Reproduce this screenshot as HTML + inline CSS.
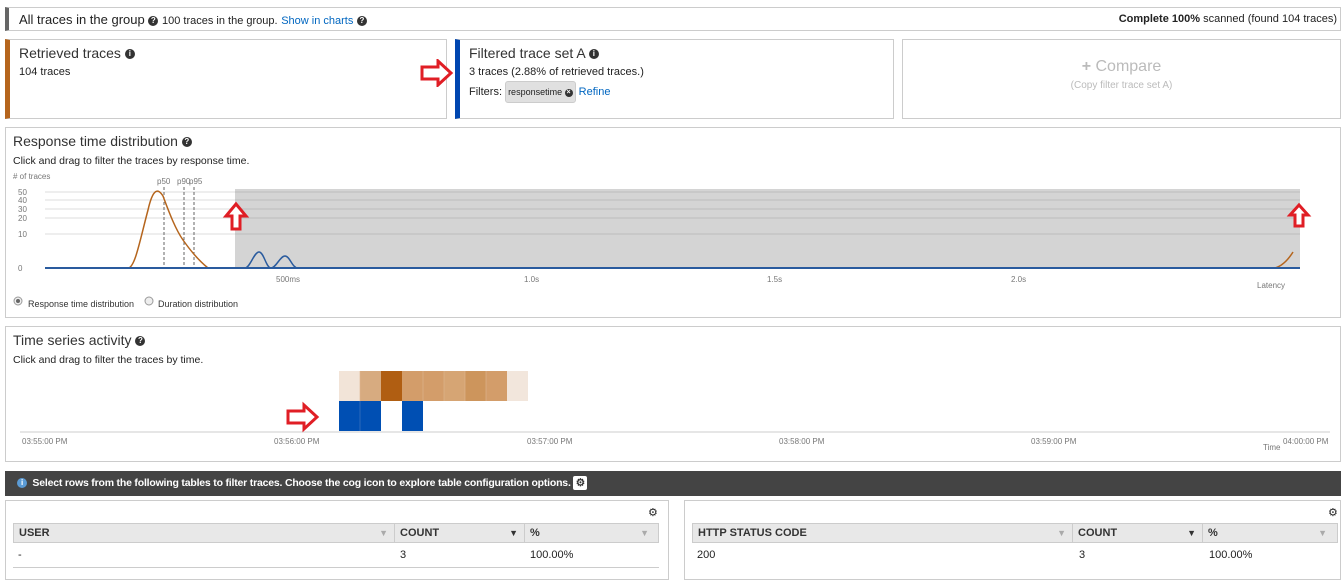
<!DOCTYPE html>
<html><head><style>
body{margin:0;width:1341px;height:573px;overflow:hidden;background:#fff;font-family:"Liberation Sans",sans-serif;color:#222;position:relative}
.a{position:absolute}
.box{position:absolute;border:1px solid #ccc;background:#fff;box-sizing:border-box}
.q{display:inline-block;width:10px;height:10px;border-radius:50%;background:#333;color:#fff;font-size:8px;line-height:10px;text-align:center;font-weight:bold;vertical-align:middle}
.lnk{color:#0066c0}
.th{position:absolute;top:0;height:19px;line-height:19px;font-size:11px;color:#333;padding-left:5px;box-sizing:border-box;border-right:1px solid #ccc}
</style></head><body>
<div class="box" style="left:5px;top:7px;width:1336px;height:24px;border-left:4px solid #666"></div>
<div class="a" style="left:19px;top:12px;font-size:13px">All traces in the group <span class="q">?</span> <span style="font-size:11px">100 traces in the group.</span> <span class="lnk" style="font-size:11px">Show in charts</span> <span class="q">?</span></div>
<div class="a" style="right:4px;top:13px;font-size:11px"><b>Complete 100%</b> scanned (found 104 traces)</div>

<div class="box" style="left:5px;top:39px;width:442px;height:80px;border-left:5px solid #b5651d"></div>
<div class="a" style="left:19px;top:45px;font-size:14px;color:#333">Retrieved traces <span class="q">i</span></div>
<div class="a" style="left:19px;top:66px;font-size:11px">104 traces</div>

<div class="box" style="left:455px;top:39px;width:439px;height:80px;border-left:5px solid #0046b0"></div>
<div class="a" style="left:469px;top:45px;font-size:14px;color:#333">Filtered trace set A <span class="q">i</span></div>
<div class="a" style="left:469px;top:66px;font-size:11px">3 traces (2.88% of retrieved traces.)</div>
<div class="a" style="left:469px;top:81px;font-size:11px">Filters: <span style="display:inline-block;background:#e0e0e0;border:1px solid #ccc;border-radius:3px;padding:5px 2px;font-size:9px">responsetime <span class="q" style="width:8px;height:8px;line-height:8px;font-size:7px">×</span></span> <span class="lnk">Refine</span></div>
<svg class="a" style="left:420px;top:59px" width="34" height="28"><path d="M2 8h16V2l13 12-13 12v-6H2z" fill="#fff" stroke="#e01e25" stroke-width="3"/></svg>

<div class="box" style="left:902px;top:39px;width:439px;height:80px"></div>
<div class="a" style="left:902px;top:58px;width:439px;text-align:center;color:#bbb;font-size:16px"><b>+</b> Compare</div>
<div class="a" style="left:902px;top:80px;width:439px;text-align:center;color:#bbb;font-size:10px">(Copy filter trace set A)</div>

<div class="box" style="left:5px;top:127px;width:1336px;height:191px"></div>
<div class="a" style="left:13px;top:133px;font-size:14px;color:#333">Response time distribution <span class="q">?</span></div>
<div class="a" style="left:13px;top:155px;font-size:10.5px">Click and drag to filter the traces by response time.</div>
<svg class="a" style="left:0;top:170px" width="1341" height="145" font-family="Liberation Sans" font-size="8" fill="#777">
<text x="13" y="9" font-size="8">#&#160;of traces</text>
<g stroke="#ddd"><line x1="45" x2="1300" y1="22" y2="22"/><line x1="45" x2="1300" y1="30" y2="30"/><line x1="45" x2="1300" y1="39" y2="39"/><line x1="45" x2="1300" y1="48" y2="48"/><line x1="45" x2="1300" y1="64" y2="64"/></g>
<text x="18" y="25">50</text><text x="18" y="33">40</text><text x="18" y="42">30</text><text x="18" y="51">20</text><text x="18" y="67">10</text><text x="18" y="101">0</text>
<rect x="235" y="19" width="1065" height="79" fill="#d4d4d4"/>
<g stroke="#bbb"><line x1="235" x2="1300" y1="22" y2="22"/><line x1="235" x2="1300" y1="30" y2="30"/><line x1="235" x2="1300" y1="39" y2="39"/><line x1="235" x2="1300" y1="48" y2="48"/><line x1="235" x2="1300" y1="64" y2="64"/></g>
<g stroke="#666" stroke-dasharray="3,2"><line x1="164" x2="164" y1="17" y2="98"/><line x1="184" x2="184" y1="17" y2="98"/><line x1="194" x2="194" y1="17" y2="98"/></g>
<text x="157" y="14">p50</text><text x="177" y="14">p90</text><text x="189" y="14">p95</text>
<path d="M128 98C135 98 140 70 148 40C153 18 158 18 163 26C170 45 176 60 183 70C190 80 198 90 208 98" fill="none" stroke="#b5651d" stroke-width="1.5"/>
<path d="M1275 98C1282 96 1288 90 1293 82" fill="none" stroke="#b5651d" stroke-width="1.5"/>
<line x1="45" x2="1300" y1="98" y2="98" stroke="#2a5b9e" stroke-width="2"/>
<path d="M245 98C250 98 254 82 259 82C264 82 266 98 271 98C276 98 280 86 285 86C290 86 292 98 298 98" fill="none" stroke="#2a5b9e" stroke-width="1.5"/>
<text x="276" y="112">500ms</text><text x="524" y="112">1.0s</text><text x="767" y="112">1.5s</text><text x="1011" y="112">2.0s</text><text x="1257" y="118">Latency</text>
<path d="M232 59h8v-13h6l-10-12-10 12h6z" fill="#fff" stroke="#e01e25" stroke-width="3"/>
<path d="M1295 56h8v-11h5l-9-10-9 10h5z" fill="#fff" stroke="#e01e25" stroke-width="3"/>
<circle cx="18" cy="131" r="4" fill="#eee" stroke="#999"/><circle cx="18" cy="131" r="2" fill="#666"/>
<text x="28" y="137" font-size="9" fill="#333">Response time distribution</text>
<circle cx="149" cy="131" r="4" fill="#eee" stroke="#999"/>
<text x="158" y="137" font-size="9" fill="#333">Duration distribution</text>
</svg>

<div class="box" style="left:5px;top:326px;width:1336px;height:136px"></div>
<div class="a" style="left:13px;top:332px;font-size:14px;color:#333">Time series activity <span class="q">?</span></div>
<div class="a" style="left:13px;top:354px;font-size:10.5px">Click and drag to filter the traces by time.</div>
<svg class="a" style="left:0;top:365px" width="1341" height="95" font-family="Liberation Sans" font-size="8" fill="#777">
<rect x="339" y="6" width="21" height="30" fill="#f2e4d8"/><rect x="360" y="6" width="21" height="30" fill="#d7ab80"/><rect x="381" y="6" width="21" height="30" fill="#b05e12"/><rect x="402" y="6" width="21" height="30" fill="#d39d6a"/><rect x="423" y="6" width="21" height="30" fill="#d39d6a"/><rect x="444" y="6" width="21" height="30" fill="#d6a574"/><rect x="465" y="6" width="21" height="30" fill="#cd955c"/><rect x="486" y="6" width="21" height="30" fill="#d39d6a"/><rect x="507" y="6" width="21" height="30" fill="#f2e6dc"/>
<g stroke="#e0b890" stroke-width="0.6"><line x1="360" x2="360" y1="6" y2="36"/><line x1="423" x2="423" y1="6" y2="36"/><line x1="444" x2="444" y1="6" y2="36"/><line x1="465" x2="465" y1="6" y2="36"/><line x1="486" x2="486" y1="6" y2="36"/></g>
<rect x="339" y="36" width="21" height="30" fill="#004fb3"/><rect x="360" y="36" width="21" height="30" fill="#004fb3"/><rect x="402" y="36" width="21" height="30" fill="#004fb3"/>
<line x1="360" x2="360" y1="36" y2="66" stroke="#4a7cc0" stroke-width="0.6"/>
<line x1="20" x2="1330" y1="67" y2="67" stroke="#ccc"/>
<text x="22" y="79">03:55:00 PM</text><text x="274" y="79">03:56:00 PM</text><text x="527" y="79">03:57:00 PM</text><text x="779" y="79">03:58:00 PM</text><text x="1031" y="79">03:59:00 PM</text><text x="1283" y="79">04:00:00 PM</text><text x="1263" y="85">Time</text>
<path d="M288 46h16v-6l13 12-13 12v-6H288z" fill="#fff" stroke="#e01e25" stroke-width="3"/>
</svg>

<div class="a" style="left:5px;top:471px;width:1336px;height:25px;background:#444;color:#fff;font-size:10.5px;line-height:25px;font-weight:bold;letter-spacing:-0.2px"><span style="margin-left:12px;background:#5b9bd5" class="q">i</span>&nbsp; Select rows from the following tables to filter traces. Choose the cog icon to explore table configuration options. <span style="display:inline-block;background:#fff;color:#333;width:14px;height:14px;line-height:14px;text-align:center;border-radius:2px;vertical-align:middle">⚙</span></div>

<div class="box" style="left:5px;top:500px;width:664px;height:80px"></div>
<div class="a" style="left:648px;top:506px;font-size:11px">⚙</div>
<div class="a" style="left:13px;top:523px;width:646px;height:20px;background:#e8e8e8;border:1px solid #ccc;box-sizing:border-box;font-weight:bold">
<div class="th" style="left:0;width:381px">USER<span style="position:absolute;right:6px;color:#aaa;font-size:9px">▼</span></div>
<div class="th" style="left:381px;width:130px">COUNT<span style="position:absolute;right:6px;color:#333;font-size:9px">▼</span></div>
<div class="th" style="left:511px;width:134px;border:0">%<span style="position:absolute;right:10px;color:#aaa;font-size:9px">▼</span></div></div>
<div class="a" style="left:18px;top:549px;font-size:11px">-</div><div class="a" style="left:400px;top:549px;font-size:11px">3</div><div class="a" style="left:530px;top:549px;font-size:11px">100.00%</div>
<div class="a" style="left:13px;top:567px;width:646px;border-top:1px solid #ccc"></div>

<div class="box" style="left:684px;top:500px;width:657px;height:80px"></div>
<div class="a" style="left:1328px;top:506px;font-size:11px">⚙</div>
<div class="a" style="left:692px;top:523px;width:646px;height:20px;background:#e8e8e8;border:1px solid #ccc;box-sizing:border-box;font-weight:bold">
<div class="th" style="left:0;width:380px">HTTP STATUS CODE<span style="position:absolute;right:6px;color:#aaa;font-size:9px">▼</span></div>
<div class="th" style="left:380px;width:130px">COUNT<span style="position:absolute;right:6px;color:#333;font-size:9px">▼</span></div>
<div class="th" style="left:510px;width:134px;border:0">%<span style="position:absolute;right:10px;color:#aaa;font-size:9px">▼</span></div></div>
<div class="a" style="left:697px;top:549px;font-size:11px">200</div><div class="a" style="left:1079px;top:549px;font-size:11px">3</div><div class="a" style="left:1209px;top:549px;font-size:11px">100.00%</div>
</body></html>
